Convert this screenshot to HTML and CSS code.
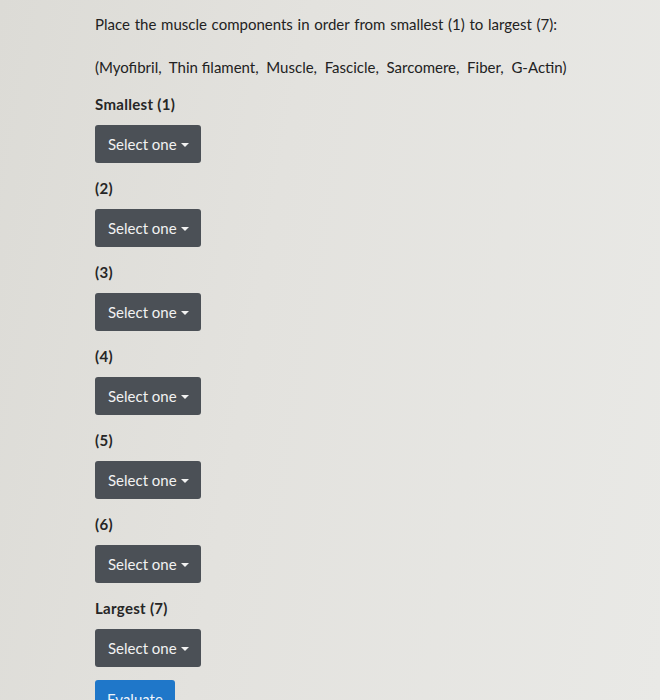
FILE: index.html
```html
<!DOCTYPE html>
<html>
<head>
<meta charset="utf-8">
<link rel="stylesheet" href="styles.css">
</head>
<body>
<div class="page">
  <p class="prompt">Place the muscle components in order from smallest (1) to largest (7):</p>
  <p class="list">(Myofibril, &nbsp;Thin filament, &nbsp;Muscle, &nbsp;Fascicle, &nbsp;Sarcomere, &nbsp;Fiber, &nbsp;G-Actin)</p>
  <div class="items">
    <div class="item"><div class="label">Smallest (1)</div><button class="select">Select one <span class="caret"></span></button></div>
    <div class="item"><div class="label">(2)</div><button class="select">Select one <span class="caret"></span></button></div>
    <div class="item"><div class="label">(3)</div><button class="select">Select one <span class="caret"></span></button></div>
    <div class="item"><div class="label">(4)</div><button class="select">Select one <span class="caret"></span></button></div>
    <div class="item"><div class="label">(5)</div><button class="select">Select one <span class="caret"></span></button></div>
    <div class="item"><div class="label">(6)</div><button class="select">Select one <span class="caret"></span></button></div>
    <div class="item"><div class="label">Largest (7)</div><button class="select">Select one <span class="caret"></span></button></div>
  </div>
  <button class="evaluate">Evaluate</button>
</div>
</body>
</html>
```
FILE: styles.css
```css
html, body {
  margin: 0;
  padding: 0;
  height: 100%;
  overflow: hidden;
}
body {
  background: linear-gradient(100deg, #dcdbd6 0%, #e3e2de 40%, #e9e9e6 100%);
  font-family: Lato, "Open Sans", sans-serif;
  color: #222222;
}
.page {
  padding: 14px 0 0 95px;
}
.prompt {
  margin: 0;
  font-size: 15px;
  line-height: 20px;
  word-spacing: 0.9px;
}
.list {
  margin: 23px 0 0 0;
  font-size: 15px;
  line-height: 20px;
}
.items {
  display: flex;
  flex-direction: column;
  gap: 15px;
  margin-top: 17px;
}
.item {
  display: flex;
  flex-direction: column;
  align-items: flex-start;
  gap: 11px;
}
.label {
  font-size: 15px;
  line-height: 20px;
  font-weight: 700;
  letter-spacing: 0.3px;
  color: #262626;
}
.select {
  height: 38px;
  padding: 0 12px 0 13px;
  border: none;
  border-radius: 3px;
  background: #4b5056;
  color: #f2f2f2;
  font-family: Lato, "Open Sans", sans-serif;
  font-size: 15px;
  display: flex;
  align-items: center;
  gap: 4px;
}
.caret {
  display: inline-block;
  width: 0;
  height: 0;
  border-left: 4px solid transparent;
  border-right: 4px solid transparent;
  border-top: 4px solid #f2f2f2;
  margin-top: 1px;
}
.evaluate {
  margin-top: 13px;
  height: 38px;
  padding: 0 12px;
  border: none;
  border-radius: 3px;
  background: #1f77c9;
  color: #eef4fb;
  font-family: Lato, "Open Sans", sans-serif;
  font-size: 15px;
}
```
